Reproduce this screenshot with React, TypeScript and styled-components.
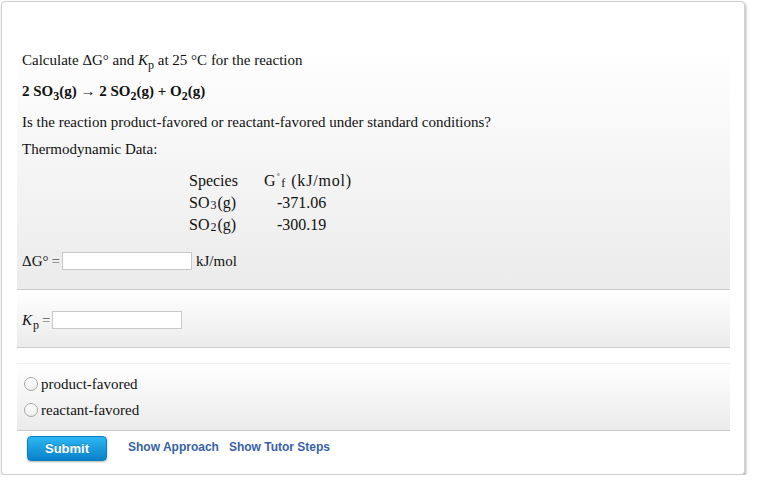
import { createGlobalStyle, styled } from "styled-components";

const GlobalStyle = createGlobalStyle`
  html, body {
    margin: 0;
    padding: 0;
    background: #ffffff;
  }
  body {
    font-family: "Liberation Serif", "Times New Roman", serif;
    color: #111;
  }
`;

const Card = styled.div`
  width: 713px;
  margin: 1px 0 0 1px;
  padding: 45px 14px 13px 15px;
  border: 1px solid #cfcfcf;
  border-radius: 4px;
  background: #fff;
  box-shadow: 1px 2px 3px rgba(0, 0, 0, 0.3);
`;

const Section = styled.div<{ $top?: string }>`
  background: linear-gradient(#ffffff, #ebebeb);
  border-bottom: 1px solid #cccccc;
  border-top: ${(p) => p.$top || "none"};
  font-size: 15px;
`;

const Intro = styled(Section)`
  padding: 4px 5px 18px;
`;

const KpSection = styled(Section)`
  padding: 20px 5px 17px;
`;

const ChoiceSection = styled(Section)`
  margin-top: 15px;
  padding: 7px 5px 7px 7px;
`;

const Para = styled.p<{ $space: number; $bold?: boolean }>`
  margin: 0 0 ${(p) => p.$space}px;
  line-height: 18px;
  font-weight: ${(p) => (p.$bold ? "bold" : "normal")};

  sub {
    font-size: 12px;
    line-height: 0;
    vertical-align: -4px;
  }
`;

const Italic = styled.i`
  font-style: italic;
`;

const DataTable = styled.table`
  margin: 12px 0 0 167px;
  border-collapse: collapse;
  font-size: 16px;

  td {
    padding: 0;
    height: 22px;
    line-height: 22px;
    white-space: nowrap;
  }
  td:first-child {
    width: 75px;
  }
  sub {
    font-size: 12px;
    line-height: 0;
    vertical-align: -1px;
    margin: 0 1px;
  }
  sup {
    font-size: 11px;
    line-height: 0;
    vertical-align: 5px;
    margin-left: 1px;
  }
`;

const Unit = styled.span`
  margin-left: 5px;
  letter-spacing: 0.8px;
`;

const Value = styled.td`
  padding-left: 13px !important;
`;

const AnswerRow = styled.div<{ $top: number }>`
  display: flex;
  align-items: center;
  height: 20px;
  margin-top: ${(p) => p.$top}px;
  font-size: 15px;
`;

const Label = styled.span`
  line-height: 18px;

  sub {
    font-size: 12px;
    line-height: 0;
    vertical-align: -4px;
    margin-left: 1px;
  }
`;

const Equals = styled.span`
  color: #555;
  margin: 0 2px 0 3px;
`;

const TextInput = styled.input`
  width: 124px;
  height: 12px;
  padding: 2px 2px;
  margin: 0 4px 0 0;
  border: 1px solid #c9c9c9;
  background: #fff;
  font-size: 12px;
  outline: none;
`;

const Choice = styled.label`
  display: flex;
  align-items: center;
  height: 26px;
  font-size: 15px;
  cursor: pointer;
`;

const Radio = styled.span`
  width: 12px;
  height: 12px;
  margin-right: 3px;
  border: 1px solid #a7a7a7;
  border-radius: 50%;
  background: linear-gradient(#ffffff, #ededed);
  box-sizing: content-box;
`;

const Footer = styled.div`
  display: flex;
  align-items: center;
  padding: 5px 0 0 10px;
  font-family: "Liberation Sans", Arial, sans-serif;
`;

const SubmitButton = styled.button`
  width: 80px;
  height: 25px;
  margin-right: 21px;
  border: 1px solid #0b7fc6;
  border-radius: 4px;
  background: linear-gradient(#2cb8f2, #0a80ca);
  box-shadow: 0 1px 2px rgba(0, 0, 0, 0.3);
  color: #fff;
  font-family: "Liberation Sans", Arial, sans-serif;
  font-weight: bold;
  font-size: 13px;
  text-shadow: 0 -1px 0 rgba(0, 0, 0, 0.2);
  padding: 0;
  cursor: pointer;
`;

const LinkButton = styled.a`
  margin-right: 10px;
  margin-top: -4px;
  color: #3862a8;
  font-weight: bold;
  font-size: 12px;
  text-decoration: none;
  cursor: pointer;
`;

const species = [
  { name: "SO", sub: "3", value: "-371.06" },
  { name: "SO", sub: "2", value: "-300.19" },
];

export default function App() {
  return (
    <>
      <GlobalStyle />
      <Card>
        <Intro>
          <Para $space={13}>
            Calculate ΔG° and <Italic>K</Italic>
            <sub>p</sub> at 25 °C for the reaction
          </Para>
          <Para $space={13} $bold>
            2 SO<sub>3</sub>(g) → 2 SO<sub>2</sub>(g) + O<sub>2</sub>(g)
          </Para>
          <Para $space={9}>
            Is the reaction product-favored or reactant-favored under standard
            conditions?
          </Para>
          <Para $space={0}>Thermodynamic Data:</Para>
          <DataTable>
            <tbody>
              <tr>
                <td>Species</td>
                <td>
                  G<sup>˚</sup>
                  <sub>f</sub>
                  <Unit>(kJ/mol)</Unit>
                </td>
              </tr>
              {species.map((s) => (
                <tr key={s.value}>
                  <td>
                    {s.name}
                    <sub>{s.sub}</sub>(g)
                  </td>
                  <Value>{s.value}</Value>
                </tr>
              ))}
            </tbody>
          </DataTable>
          <AnswerRow $top={15}>
            <Label>ΔG°</Label>
            <Equals>=</Equals>
            <TextInput type="text" />
            kJ/mol
          </AnswerRow>
        </Intro>
        <KpSection>
          <AnswerRow $top={0}>
            <Label>
              <Italic>K</Italic>
              <sub>p</sub>
            </Label>
            <Equals>=</Equals>
            <TextInput type="text" />
          </AnswerRow>
        </KpSection>
        <ChoiceSection $top="1px solid #eeeeee">
          <Choice>
            <Radio />
            product-favored
          </Choice>
          <Choice>
            <Radio />
            reactant-favored
          </Choice>
        </ChoiceSection>
        <Footer>
          <SubmitButton>Submit</SubmitButton>
          <LinkButton>Show Approach</LinkButton>
          <LinkButton>Show Tutor Steps</LinkButton>
        </Footer>
      </Card>
    </>
  );
}
